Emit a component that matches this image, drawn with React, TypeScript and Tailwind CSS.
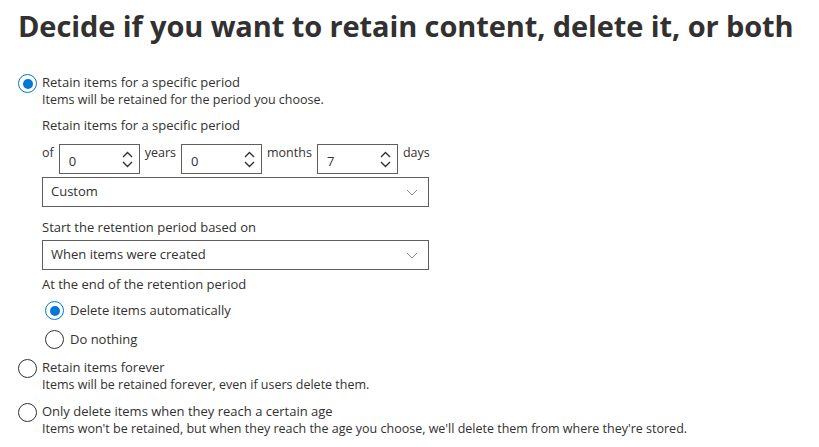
import React from 'react';

const font = { fontFamily: '"Open Sans", "Noto Sans", Arial, sans-serif' };

function Radio({ checked }: { checked?: boolean }) {
  return (
    <span
      className={`flex h-[19px] w-[19px] shrink-0 items-center justify-center rounded-full border ${
        checked ? 'border-[#0078d4]' : 'border-[#323130]'
      } bg-white`}
    >
      {checked && <span className="h-[10px] w-[10px] rounded-full bg-[#0078d4]" />}
    </span>
  );
}

function Spinner({ value }: { value: string }) {
  return (
    <div className="flex h-[30px] w-[81px] items-center justify-between border border-[#605e5c] pl-[9px] pr-[6px]">
      <span className="mt-[4px] text-[13px] text-[#323130]">{value}</span>
      <div className="flex flex-col items-center gap-[3px]">
        <svg width="11" height="7" viewBox="0 0 11 7" fill="none">
          <path d="M1 6L5.5 1.5L10 6" stroke="#323130" strokeWidth="1.4" />
        </svg>
        <svg width="11" height="7" viewBox="0 0 11 7" fill="none">
          <path d="M1 1L5.5 5.5L10 1" stroke="#323130" strokeWidth="1.4" />
        </svg>
      </div>
    </div>
  );
}

function Dropdown({ value }: { value: string }) {
  return (
    <div className="flex h-[30px] w-[387px] items-center justify-between border border-[#605e5c] pl-[8px] pr-[10px]">
      <span className="text-[13px] text-[#323130]">{value}</span>
      <svg width="12" height="7" viewBox="0 0 12 7" fill="none">
        <path d="M1 1L6 6L11 1" stroke="#8a8886" strokeWidth="1" />
      </svg>
    </div>
  );
}

export default function App() {
  return (
    <div className="h-[447px] w-[819px] overflow-hidden bg-white text-[#323130]" style={font}>
      <h1 className="pl-[18px] pt-[7px] text-[29px] font-bold leading-[38px] tracking-[-0.1px]">
        Decide if you want to retain content, delete it, or both
      </h1>

      <div className="mt-[29px] pl-[18px]">
        {/* option 1 */}
        <div className="flex gap-[5px]">
          <Radio checked />
          <div className="text-[13px] leading-[17px]">
            <div>Retain items for a specific period</div>
            <div className="text-[12.5px]">Items will be retained for the period you choose.</div>
          </div>
        </div>

        <div className="pl-[24px]">
          <div className="mt-[9px] text-[13px] font-medium leading-[17px]">Retain items for a specific period</div>

          <div className="mt-[10px] flex items-start gap-[5px] text-[12.5px] leading-[17px]">
            <span>of</span>
            <Spinner value="0" />
            <span>years</span>
            <Spinner value="0" />
            <span>months</span>
            <Spinner value="7" />
            <span>days</span>
          </div>

          <div className="mt-[3px]">
            <Dropdown value="Custom" />
          </div>

          <div className="mt-[12px] text-[13px] font-medium leading-[17px]">Start the retention period based on</div>
          <div className="mt-[4px]">
            <Dropdown value="When items were created" />
          </div>

          <div className="mt-[6px] text-[13px] font-medium leading-[17px]">At the end of the retention period</div>

          <div className="mt-[8px] flex flex-col gap-[9px] pl-[3px]">
            <div className="flex items-center gap-[6px]">
              <Radio checked />
              <span className="text-[13px] font-medium">Delete items automatically</span>
            </div>
            <div className="flex items-center gap-[6px]">
              <Radio />
              <span className="text-[13px] font-medium">Do nothing</span>
            </div>
          </div>
        </div>

        <div className="mt-[10px] flex gap-[5px]">
          <Radio />
          <div className="text-[13px] leading-[17px]">
            <div>Retain items forever</div>
            <div className="text-[12.5px]">Items will be retained forever, even if users delete them.</div>
          </div>
        </div>

        <div className="mt-[10px] flex gap-[5px]">
          <Radio />
          <div className="text-[13px] leading-[17px]">
            <div>Only delete items when they reach a certain age</div>
            <div className="text-[12.5px]">
              Items won't be retained, but when they reach the age you choose, we'll delete them from where they're stored.
            </div>
          </div>
        </div>
      </div>
    </div>
  );
}
